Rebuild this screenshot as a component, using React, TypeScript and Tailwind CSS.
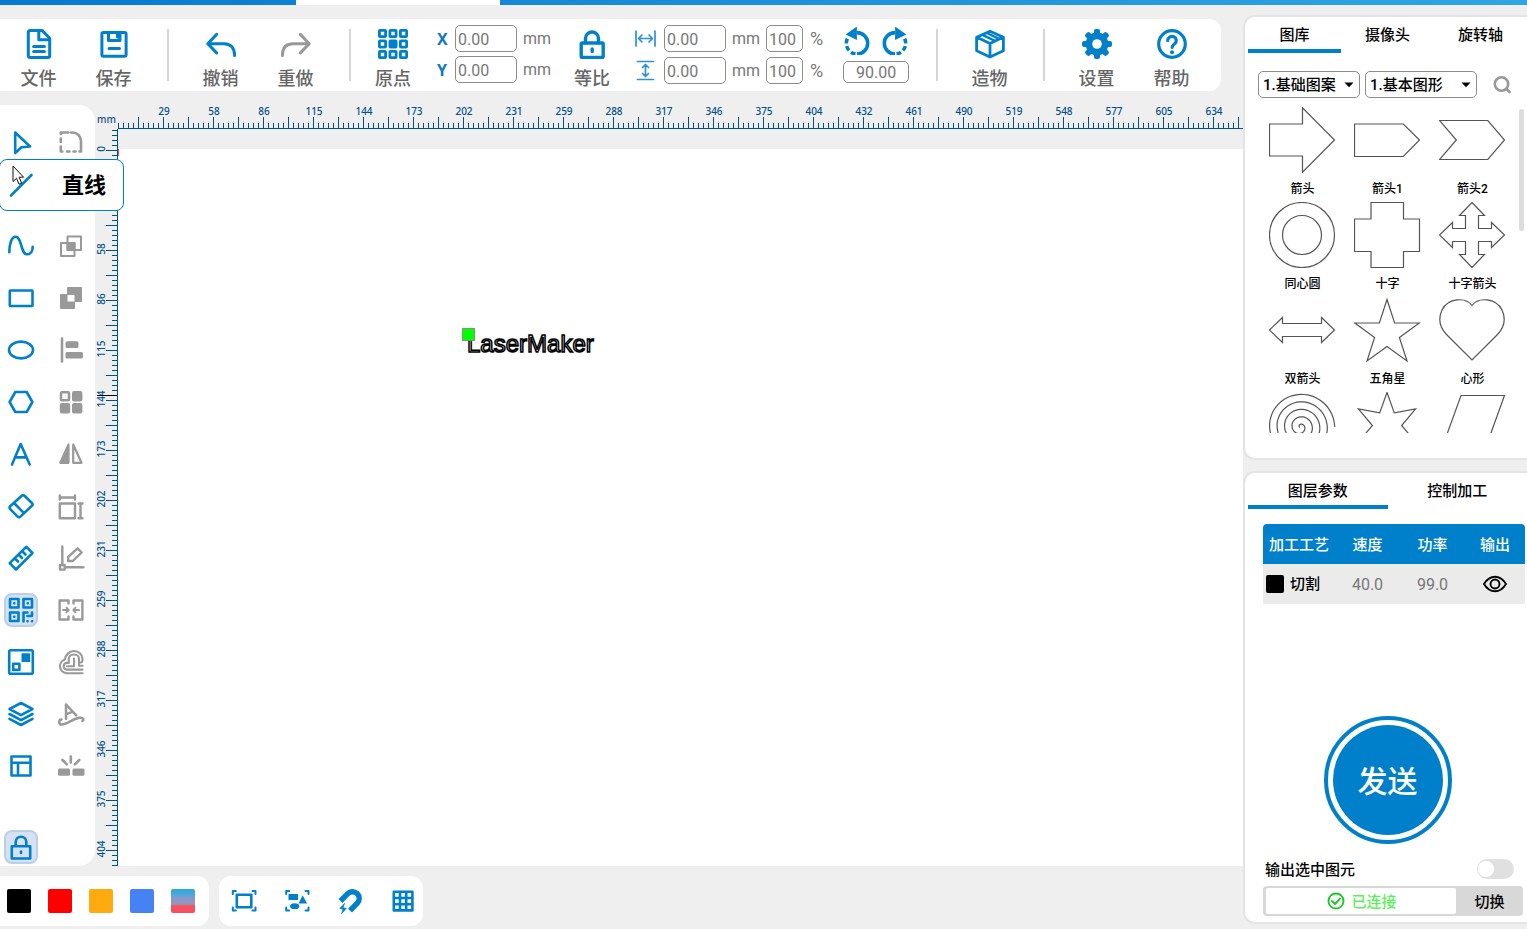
import type { FC, ReactNode } from "react";

const BLUE = "text-[#0080cb]";
const GRAY = "text-[#999999]";
const NUMBER_INPUT = "rounded-[5px] border border-[#8c8c8c] bg-white pt-px text-base text-[#777777] outline-none";

const Icon: FC<{ size?: number; stroke?: number; children: ReactNode }> = ({ size = 28, stroke = 2.6, children }) => (
  <svg
    width={size}
    height={size}
    viewBox={`0 0 ${size} ${size}`}
    fill="none"
    stroke="currentColor"
    strokeWidth={stroke}
    strokeLinecap="round"
    strokeLinejoin="round"
    className="shrink-0"
    aria-hidden="true"
  >
    {children}
  </svg>
);

/* ---------- top toolbar ---------- */

const ORIGIN_CELLS = [0, 10.5, 21];

const FileIcon = () => (
  <Icon size={30} stroke={3}>
    <path d="M6.3 1.6h12l7.4 7.6v17.2a2 2 0 0 1-2 2H6.3a2 2 0 0 1-2-2V3.6a2 2 0 0 1 2-2Z" />
    <path d="M14.8 2.5v8.2h10M9.6 17.5h10.8M9.6 22.5h10.8" />
  </Icon>
);

const SaveIcon = () => (
  <Icon size={30} stroke={3}>
    <rect x="2.9" y="3.6" width="24.2" height="23.6" rx="1.5" />
    <path d="M9.5 4v7.5h11.5V4M18.5 5v3M10 19.4h10.5" />
  </Icon>
);

const UndoIcon = () => (
  <Icon size={30} stroke={3}>
    <path d="M10.6 5.4 1.8 14.7l8.8 9.2M2.5 14.7H18c7 0 10.6 4.4 10.6 11.8" />
  </Icon>
);

const RedoIcon = () => (
  <Icon size={30} stroke={3}>
    <path d="m19.4 5.4 8.8 9.3-8.8 9.2M27.5 14.7H12C5 14.7 1.4 19.1 1.4 26.5" />
  </Icon>
);

const OriginIcon = () => (
  <Icon size={30} stroke={2.8}>
    {ORIGIN_CELLS.map((y) =>
      ORIGIN_CELLS.map((x) => (
        <rect
          key={`${x}-${y}`}
          x={x + 1.4}
          y={y + 1.4}
          width="6.2"
          height="6.2"
          rx="0.6"
          fill={x === 10.5 && y === 10.5 ? "currentColor" : "none"}
        />
      )),
    )}
  </Icon>
);

const RatioLockIcon = () => (
  <Icon size={30} stroke={3.4}>
    <path d="M8.5 14V9.5a6.5 6.5 0 0 1 13 0V14" />
    <rect x="4.2" y="14" width="22" height="14.5" rx="1" />
    <path d="M15.2 20v2.5" />
  </Icon>
);

const PackageIcon = () => (
  <Icon size={30} stroke={2.8}>
    <path d="M15 2.2 28.4 8.2v13.6L15 28 1.6 21.8V8.2ZM2 8.300l13 6.200 13-6.200M15 15v12.500" />
    <path d="m7.500 5.800 12.500 6M11.800 4l12.400 5.800" strokeWidth="2.400" />
  </Icon>
);

const GEAR_ANGLES = [0, 45, 90, 135];

const GearIcon = () => (
  <Icon size={30}>
    <g fill="currentColor" stroke="none">
      <circle cx="15" cy="15" r="11.4" />
      {GEAR_ANGLES.map((angle) => (
        <rect key={angle} x="12" y="0" width="6" height="30" rx="2" transform={`rotate(${angle} 15 15)`} />
      ))}
      <circle cx="15" cy="15" r="4.8" fill="#fff" />
    </g>
  </Icon>
);

const HelpIcon = () => (
  <Icon size={30} stroke={3.2}>
    <circle cx="15" cy="15" r="13.3" />
    <path d="M10.7 11.5a4.3 4.1 0 1 1 7 3.2c-1.5 1.2-2.6 1.7-2.6 3.8" />
    <circle cx="15" cy="23.2" r="2" fill="currentColor" stroke="none" />
  </Icon>
);

const RotateIcon: FC<{ clockwise?: boolean }> = ({ clockwise = false }) => (
  <Icon size={28} stroke={3.6}>
    <g transform={clockwise ? "translate(28 0) scale(-1 1)" : undefined} strokeLinecap="butt">
      <path d="M14 5.600a10.700 10.700 0 0 1 0 21.400" />
      <path d="M12.500 26.900A10.700 10.700 0 0 1 5.200 10.200" strokeDasharray="4.800 2.700" />
      <path d="M2.600 7.500 13.900-.5v13.600Z" fill="currentColor" stroke="none" />
    </g>
  </Icon>
);

const WidthIcon = () => (
  <Icon size={21} stroke={1.7}>
    <path d="M1 3v15M20 3v15M4 10.5h13M7 7l-3.500 3.500L7 14M14 7l3.500 3.500L14 14" />
  </Icon>
);

const HeightIcon = () => (
  <Icon size={21} stroke={1.7}>
    <path d="M2.5 1.5h16M2.5 19.5h16M10.5 5v11M7.500 7.500l3-3 3 3M7.500 13.500l3 3 3-3" />
  </Icon>
);

const ToolbarButton: FC<{ label: string; narrow?: boolean; disabled?: boolean; children: ReactNode }> = ({
  label,
  narrow = false,
  disabled = false,
  children,
}) => (
  <button
    type="button"
    className={`flex shrink-0 flex-col items-center gap-2 pt-[10px] ${narrow ? "w-[54px]" : "w-[75px] pr-[2px]"}`}
  >
    <span className={disabled ? GRAY : BLUE}>{children}</span>
    <span className="text-lg leading-6 font-medium text-[#666666]">{label}</span>
  </button>
);

const ToolbarDivider = () => <div className="mx-[15px] mt-[10px] h-[52px] w-[2px] shrink-0 bg-[#d6d6d6]" />;

const PositionField: FC<{ axis: string }> = ({ axis }) => (
  <label className="flex h-[27px] items-center">
    <span className="w-[18px] font-['Noto_Sans',sans-serif] text-base font-bold text-[#1478c4]">{axis}</span>
    <input defaultValue="0.00" className={`${NUMBER_INPUT} h-[27px] w-[62px] pl-[2px]`} />
    <span className="ml-[6px] pt-px text-base text-[#777777]">mm</span>
  </label>
);

const SizeField: FC<{ name: string; icon: ReactNode }> = ({ name, icon }) => (
  <div className="flex h-[27px] items-center text-[#777777]">
    <span className="text-[#2b92d4]">{icon}</span>
    <input aria-label={name} defaultValue="0.00" className={`${NUMBER_INPUT} ml-2 h-[27px] w-[62px] pl-[2px]`} />
    <span className="ml-[6px] w-[28px] pt-px text-base">mm</span>
    <input aria-label={`${name}%`} defaultValue="100" className={`${NUMBER_INPUT} ml-[6px] h-[27px] w-[37px] pl-[2px]`} />
    <span className="ml-[7px] w-[15px] pt-px text-lg">%</span>
  </div>
);

const Toolbar = () => (
  <header className="mt-[14px] mr-[22px] flex h-[72px] items-start rounded-r-xl bg-white pl-[2px]">
    <ToolbarButton label="文件"><FileIcon /></ToolbarButton>
    <ToolbarButton label="保存"><SaveIcon /></ToolbarButton>
    <ToolbarDivider />
    <ToolbarButton label="撤销"><UndoIcon /></ToolbarButton>
    <ToolbarButton label="重做" disabled><RedoIcon /></ToolbarButton>
    <ToolbarDivider />
    <ToolbarButton label="原点" narrow><OriginIcon /></ToolbarButton>
    <div className="ml-[17px] flex shrink-0 flex-col gap-1 pt-[6px]">
      <PositionField axis="X" />
      <PositionField axis="Y" />
    </div>
    <div className="ml-[14px]">
      <ToolbarButton label="等比" narrow><RatioLockIcon /></ToolbarButton>
    </div>
    <div className="ml-4 flex shrink-0 flex-col gap-[5px] pt-[6px]">
      <SizeField name="宽" icon={<WidthIcon />} />
      <SizeField name="高" icon={<HeightIcon />} />
    </div>
    <div className="mr-3 ml-[18px] flex w-[66px] shrink-0 flex-col pt-2">
      <div className={`flex justify-between ${BLUE}`}>
        <button type="button" aria-label="逆时针旋转"><RotateIcon /></button>
        <button type="button" aria-label="顺时针旋转"><RotateIcon clockwise /></button>
      </div>
      <input
        aria-label="旋转角度"
        defaultValue="90.00"
        className={`${NUMBER_INPUT} mt-[6px] h-[22px] w-full text-center`}
      />
    </div>
    <ToolbarDivider />
    <ToolbarButton label="造物"><PackageIcon /></ToolbarButton>
    <ToolbarDivider />
    <ToolbarButton label="设置"><GearIcon /></ToolbarButton>
    <ToolbarButton label="帮助"><HelpIcon /></ToolbarButton>
  </header>
);

/* ---------- left palette ---------- */

interface Tool {
  label: string;
  active?: boolean;
  icon: ReactNode;
}

const DRAW_TOOLS: Tool[] = [
  { label: "选择", icon: <path d="M8.2 4.5 23 18.5l-8.400.800-6.400 5.700Z" /> },
  { label: "直线", icon: <path d="M4 24 24 4" /> },
  { label: "曲线", icon: <path d="M2.300 20.300C2.300 12 4.500 4.800 8.700 4.800 15 4.800 13.500 22.300 20 22.300c4 0 5.700-3.800 5.700-7.600" /> },
  { label: "矩形", icon: <rect x="2.8" y="6.5" width="22.7" height="15.5" rx="0.5" /> },
  { label: "椭圆", icon: <ellipse cx="14" cy="14" rx="12" ry="8.4" /> },
  { label: "多边形", icon: <path d="M2.600 14 8.300 4h11.400l5.700 10-5.700 10H8.300Z" /> },
  { label: "文字", icon: <path d="M5 24.600 13.700 4l9 20.600M8.500 17.400h10.500" /> },
  {
    label: "橡皮擦",
    icon: <path d="m3.200 14.200 11.500-10.500a2 2 0 0 1 2.800 0l7.400 7.300a2 2 0 0 1 0 2.800L13.400 24.600a2 2 0 0 1-2.800 0l-7.400-7.500a2 2 0 0 1 0-2.900ZM7.500 11.500l9 9.200" />,
  },
  {
    label: "测量",
    icon: <path d="M19.200 2.800 25.500 9 9 25.500l-6.300-6.300ZM8 14.500l3 3M12 11l3 3M15.500 7.500l3 3" />,
  },
  {
    label: "二维码",
    active: true,
    icon: (
      <>
        <path d="M3 3h8.500v8.500H3ZM16.500 3H25v8.500h-8.500ZM3 16.500h8.500V25H3Z" />
        <path d="M16.500 25.500v-9h4M25 16.500V20h-4.500M20.500 25.200h.100M25 25.200h.100M7.200 7.200h.100M20.700 7.200h.100M7.200 20.700h.100" />
      </>
    ),
  },
  {
    label: "嵌套",
    icon: (
      <>
        <rect x="2.2" y="2.2" width="23.6" height="23.6" rx="1.5" />
        <rect x="14.5" y="5.3" width="8.7" height="8.7" rx="0.5" fill="currentColor" stroke="none" />
        <rect x="6.2" y="15.7" width="6.2" height="6.2" />
      </>
    ),
  },
  { label: "图层", icon: <path d="m14 3 11.500 6L14 15.200 2.500 9ZM2.500 14 14 20.200 25.500 14M2.500 18.800 14 25l11.500-6.200" /> },
  { label: "布局", icon: <path d="M4.500 4.500h19v19h-19ZM4.500 10.700h19M11 10.700v12.500" /> },
];

const EDIT_TOOLS: Tool[] = [
  {
    label: "圆角",
    icon: <path d="M3.800 6V4.500h7.500M14 4.500h1.500a8.500 8.500 0 0 1 8.500 8.500v10.500h-1.500M3.800 10.500v3.500M3.800 18.500v5h1.500M10 23.500h2.500M16.500 23.500h2" />,
  },
  { label: "平移", icon: null },
  {
    label: "交集",
    icon: (
      <g strokeWidth="2">
        <path d="M10.500 4.500h13.500v13.500h-13.500ZM4 11h13.500v13H4Z" />
        <path d="M10.500 11h7v7h-7Z" fill="currentColor" />
      </g>
    ),
  },
  {
    label: "差集",
    icon: (
      <path
        fillRule="evenodd"
        fill="currentColor"
        stroke="none"
        d="M11 3h13q1 0 1 1V17q0 1-1 1H18v6q0 1-1 1H4q-1 0-1-1V11q0-1 1-1h6V4q0-1 1-1ZM11.500 11h5.500q.500 0 .500.500V17q0 .500-.500.500h-6q-.500 0-.500-.500v-5.500q0-.500.500-.500Z"
      />
    ),
  },
  {
    label: "对齐",
    icon: (
      <>
        <path d="M5 2.500v23" />
        <g fill="currentColor" stroke="none">
          <rect x="8.5" y="5.3" width="13" height="6.7" rx="1.5" />
          <rect x="8.5" y="16" width="17.500" height="6.5" rx="1.5" />
        </g>
      </>
    ),
  },
  {
    label: "阵列",
    icon: (
      <>
        <rect x="4" y="4.2" width="8" height="8" rx="1" />
        <g fill="currentColor" stroke="none">
          <rect x="15" y="3" width="10.4" height="10.4" rx="2" />
          <rect x="2.8" y="15" width="10.4" height="10.4" rx="2" />
          <rect x="15" y="15" width="10.4" height="10.4" rx="2" />
        </g>
      </>
    ),
  },
  {
    label: "镜像",
    icon: (
      <g strokeWidth="2.2">
        <path d="M11.500 4.500v18.300H3.300Z" fill="currentColor" />
        <path d="M16.200 4.500v18.300h8.300Z" />
      </g>
    ),
  },
  {
    label: "尺寸",
    icon: <path strokeWidth="2.400" d="M2.800 11.500h15.200v14.700H2.800ZM2.800 3.500v4M18 3.500v4M3 5.500h15M21.500 11.500h4M21.500 26.200h4M23.500 11.500v14.700" />,
  },
  {
    label: "标注",
    icon: (
      <g strokeWidth="2.4">
        <path d="M5.300 2.500v18M8 23.300h18.500M3 21h4.600v4.600H3Z" />
        <path d="m20.500 4.300 4.200 4.200L15.800 17h-4.600v-4.200Z" />
      </g>
    ),
  },
  {
    label: "合并",
    icon: (
      <g strokeWidth="2.4">
        <path d="M11.500 7.500v-3H2.600v19h8.900v-3M16.500 7.500v-3h8.900v19h-8.900v-3" />
        <path d="M6 14h5.500M9.500 11.700l2.200 2.300-2.200 2.300M22 14h-5.500M18.500 11.700 16.300 14l2.200 2.300" strokeWidth="1.9" />
      </g>
    ),
  },
  {
    label: "偏移",
    icon: (
      <g strokeWidth="2.1">
        <path d="M25.500 25.200H9.500a7 7 0 0 1-1.500-13.700C8.500 6.500 12.500 3 17 3c4.800 0 8.500 3.500 8.500 8v1c0 1.500-.800 2.500-2 2.500" />
        <path d="M25.500 21.600h-16a3.400 3.400 0 0 1 0-6.700h2.300V11c0-2.500 2.200-4.500 5.200-4.500s5 2 5 4.500v6.800h3.500" />
        <path d="M17 10.500v7.700h-7" />
      </g>
    ),
  },
  {
    label: "路径文字",
    icon: (
      <g strokeWidth="2.500">
        <path d="M9 4.500v14.300M9 4.500l10.300 10.800M9.500 14.200l6-2.300" />
        <path d="M4.500 19.500c-3 .300-3.200 5 .500 5 5 0 10-5.500 17.500-6.800 4-.500 4.500 2.300 3 3.300" />
      </g>
    ),
  },
  {
    label: "打断",
    icon: (
      <>
        <path d="M13.800 4.500v6M5.500 8l4.300 4.300M22.200 8l-4.300 4.300" />
        <g fill="currentColor" stroke="none">
          <rect x="1" y="16.5" width="12" height="7.2" rx="1.5" />
          <rect x="15.5" y="16.5" width="12" height="7.2" rx="1.5" />
        </g>
      </>
    ),
  },
];

const ToolButton: FC<{ tool: Tool; tone: string }> = ({ tool, tone }) => (
  <button
    type="button"
    aria-label={tool.label}
    className={`flex size-[34px] items-center justify-center rounded-lg ${tone} ${
      tool.active ? "border-2 border-[#b9cfea] bg-[#d6e2f2]" : ""
    }`}
  >
    <Icon>{tool.icon}</Icon>
  </button>
);

const PointerCursor = () => (
  <svg width="14" height="22" viewBox="0 0 14 22" className="absolute top-[5px] left-[12px]" aria-hidden="true">
    <path d="M1 1v15.500l3.500-3.300 2.600 6 2.600-1.100-2.600-5.900h4.500Z" fill="#fff" stroke="#111" />
  </svg>
);

const LineFlyout = () => (
  <button
    type="button"
    className="absolute top-[54px] -left-px z-10 flex h-[52px] w-[125px] items-center rounded-lg border border-[#0080cb] bg-white pl-[7px]"
  >
    <span className={BLUE}>
      <Icon>
        <path d="M4 24.500 24.500 4" />
      </Icon>
    </span>
    <span className="ml-[27px] pt-px text-[22px] font-bold text-black">直线</span>
    <PointerCursor />
  </button>
);

const Palette = () => (
  <nav className="relative flex w-[95px] shrink-0 flex-col justify-between rounded-r-2xl bg-white pt-[11px] pb-[2px]">
    <div className="flex gap-4 pl-1">
      <div className="flex flex-col">
        {DRAW_TOOLS.map((tool) => (
          <div key={tool.label} className="flex h-[52px] items-center">
            <ToolButton tool={tool} tone={BLUE} />
          </div>
        ))}
      </div>
      <div className="flex flex-col">
        {EDIT_TOOLS.map((tool) => (
          <div key={tool.label} className="flex h-[52px] items-center">
            <ToolButton tool={tool} tone={GRAY} />
          </div>
        ))}
      </div>
    </div>
    <div className="pl-1">
      <ToolButton
        tone={BLUE}
        tool={{
          label: "锁定",
          active: true,
          icon: <path d="M8.700 13V9a5.300 5.300 0 0 1 10.600 0v4M4.800 13.300h18.400v12.200H4.800ZM14 18.500v1.500" />,
        }}
      />
    </div>
    <LineFlyout />
  </nav>
);

/* ---------- rulers and canvas ---------- */

const MM_PER_LABEL = 28.83;
const range = (count: number) => Array.from({ length: count }, (_, i) => i);

const HorizontalRuler = () => (
  <svg width="100%" height="24" className="block overflow-hidden" fill="#00508a">
    <rect x="0" y="23" width="100%" height="1" />
    {range(400).map((i) => {
      const tall = i % 5 === 4;
      return <rect key={i} x={i * 5} y={tall ? 12 : 18} width="1" height={tall ? 11 : 5} />;
    })}
    {range(22).map((i) => (
      <text
        key={i}
        x={46 + i * 50}
        y="10"
        textAnchor="middle"
        fontFamily="Noto Sans, sans-serif"
        fontSize="10"
        fontWeight="500"
      >
        {Math.round((i + 1) * MM_PER_LABEL)}
      </text>
    ))}
  </svg>
);

const VerticalRuler = () => (
  <svg width="23" height="100%" className="block overflow-hidden" fill="#00508a">
    <rect x="22" y="0" width="1" height="100%" />
    {range(300).map((i) => {
      const tall = i % 5 === 4;
      return <rect key={i} x={tall ? 11 : 17} y={1 + i * 5} width={tall ? 11 : 5} height="1" />;
    })}
    {range(15).map((i) => (
      <text
        key={i}
        transform={`translate(10 ${20 + i * 50}) rotate(-90)`}
        textAnchor="middle"
        fontFamily="Noto Sans, sans-serif"
        fontSize="10"
        fontWeight="500"
      >
        {Math.round(i * MM_PER_LABEL)}
      </text>
    ))}
    <rect x="2" y="266" width="20" height="1" fill="#000" />
  </svg>
);

const Workspace = () => (
  <main className="grid min-w-0 flex-1 grid-cols-[23px_minmax(0,1fr)] grid-rows-[24px_minmax(0,1fr)]">
    <span className="self-end pb-px pl-[2px] font-['Noto_Sans',sans-serif] text-[10px] leading-[18px] font-medium text-[#1c4f86]">
      mm
    </span>
    <HorizontalRuler />
    <div className="min-h-0 overflow-hidden">
      <VerticalRuler />
    </div>
    <div className="relative mt-5 overflow-hidden bg-white">
      <svg width="140" height="32" className="absolute top-[178px] left-[343px]" aria-label="LaserMaker">
        <text
          x="6"
          y="25"
          fontFamily="Liberation Sans, Arial, sans-serif"
          fontSize="24"
          fill="#fff"
          stroke="#000"
          strokeWidth="1.5"
        >
          LaserMaker
        </text>
        <rect x="1.5" y="1.5" width="12" height="12" fill="#00ff00" stroke="#7a9a7a" />
      </svg>
      <div className="absolute top-0 left-0 h-[7px] w-px bg-[#f04050]" />
    </div>
  </main>
);

/* ---------- bottom bar ---------- */

const SWATCHES = [
  { label: "黑色", className: "bg-black" },
  { label: "红色", className: "bg-[#ff0000]" },
  { label: "橙色", className: "bg-[#ffab0f]" },
  { label: "蓝色", className: "bg-[#4583f5]" },
  {
    label: "渐变",
    className: "bg-[linear-gradient(#2fa4dc_0%,#5aa9dc_33%,#9095c8_34%,#9095c8_62%,#b08a80_66%,#fa4f60_70%)]",
  },
];

const VIEW_TOOLS: Tool[] = [
  {
    label: "适应画布",
    icon: (
      <>
        <rect x="6.8" y="7.8" width="14.500" height="12.5" />
        <path strokeWidth="2" d="M2.800 7V4h3M22.500 4h3v3M2.800 20.500v3h3M25.500 20.500v3h-3" />
      </>
    ),
  },
  {
    label: "显示全部",
    icon: (
      <>
        <path strokeWidth="2" d="M3.200 7V4h3M22.500 4h3v3M3.200 20.500v3h3M25.500 20.500v3h-3" />
        <g fill="currentColor" stroke="none">
          <rect x="5.5" y="7" width="9.5" height="6" rx="0.5" />
          <path d="m19.600 8.300 4.500 8.200h-8.500Z" />
          <ellipse cx="11.7" cy="19.2" rx="4.6" ry="2.9" />
        </g>
      </>
    ),
  },
  {
    label: "吸附",
    icon: (
      <>
        <path strokeLinecap="butt" strokeWidth="5.5" d="m4.500 14 7-7.200a6.700 6.700 0 0 1 9.800 9.300L14 23.700" />
        <path d="m8.500 16.500-4.800 5 3.200.700-1.400 4.600 4.900-5.400-3.200-.600Z" fill="currentColor" strokeWidth="0.6" />
      </>
    ),
  },
  {
    label: "网格",
    icon: <path strokeWidth="2.6" d="M4.800 4.800h18.600v18.600H4.800ZM11 4.800v18.600M17.200 4.800v18.600M4.800 11h18.600M4.800 17.200h18.600" />,
  },
];

const BottomBar = () => (
  <footer className="mt-[10px] mb-[3px] flex h-[50px] gap-[10px]">
    <div className="flex items-center gap-[17px] rounded-r-xl bg-white pr-[14px] pl-[7px]">
      {SWATCHES.map(({ label, className }) => (
        <button key={label} type="button" aria-label={label} className={`size-6 rounded-[2px] ${className}`} />
      ))}
    </div>
    <div className={`flex items-center gap-[25px] rounded-xl bg-white pr-[6px] pl-[11px] ${BLUE}`}>
      {VIEW_TOOLS.map(({ label, icon }) => (
        <button key={label} type="button" aria-label={label}>
          <Icon>{icon}</Icon>
        </button>
      ))}
    </div>
  </footer>
);

/* ---------- right side ---------- */

const PANEL = "flex flex-col rounded-l-xl border-2 border-r-0 border-[#e4e4e4] bg-white pl-[3px]";

const starPoints = (spikes: number, outer: number, inner: number, cx: number, cy: number) =>
  range(spikes * 2)
    .map((i) => {
      const r = i % 2 === 0 ? outer : inner;
      const a = (Math.PI * i) / spikes - Math.PI / 2;
      return `${(cx + r * Math.cos(a)).toFixed(1)},${(cy + r * Math.sin(a)).toFixed(1)}`;
    })
    .join(" ");

// Archimedean spiral that winds clockwise and ends on the right-hand side
const spiralPoints = (outer: number, pitch: number, cx: number, cy: number) => {
  const steps = Math.floor((outer / pitch) * 48);
  return range(steps)
    .map((i) => {
      const r = outer - (i * pitch) / 48;
      const a = (-2 * Math.PI * i) / 48;
      return `${(cx + r * Math.cos(a)).toFixed(1)},${(cy + r * Math.sin(a)).toFixed(1)}`;
    })
    .join(" ");
};

const SHAPES: { name: string; drawing: ReactNode }[] = [
  { name: "箭头", drawing: <path d="M.5 17h33V.8L65.500 33 33.500 65.200V49H.5Z" /> },
  { name: "箭头1", drawing: <path d="M.5 17h48.800L65.500 33 49.300 49.500H.5Z" /> },
  { name: "箭头2", drawing: <path d="M.5 13.500h48.300L65.500 33 48.800 52.500H.5L17.300 33Z" /> },
  {
    name: "同心圆",
    drawing: (
      <>
        <circle cx="33" cy="33" r="32.5" />
        <circle cx="33" cy="33" r="19.5" />
      </>
    ),
  },
  { name: "十字", drawing: <path d="M17 .5h32.500V17h16v32.500h-16v16H17v-16H.5V17H17Z" /> },
  {
    name: "十字箭头",
    drawing: (
      <path d="M33 .5 45.500 13.500H39.500V26.500H52.500V20.500L65.500 33 52.500 45.500V39.500H39.500V52.500H45.500L33 65.500 20.500 52.500H26.500V39.500H13.500V45.500L.5 33 13.500 20.500V26.500H26.500V13.500H20.500Z" />
    ),
  },
  { name: "双箭头", drawing: <path d="M.5 33 13.500 20.500v6h39v-6l13 12.500-13 12.500v-6h-39v6Z" /> },
  { name: "五角星", drawing: <polygon points={starPoints(5, 34, 13, 33, 36.5)} /> },
  { name: "心形", drawing: <path d="M33 8.500C27 0 9 .5 3 13-1.500 23 1 31 8 38L33 63 58 38C65 31 67.500 23 63 13 57 .5 39 0 33 8.500Z" /> },
  { name: "螺旋", drawing: <polyline points={spiralPoints(34.5, 7.5, 31.3, 35)} /> },
  { name: "六角星", drawing: <polygon points={starPoints(6, 33, 14.6, 33, 33.5)} /> },
  { name: "平行四边形", drawing: <path d="M22 3.500h43.500L44 63H.5Z" /> },
];

const TabButton: FC<{ label: string; active?: boolean }> = ({ label, active = false }) => (
  <button
    type="button"
    role="tab"
    aria-selected={active}
    className={`h-full flex-1 border-b-4 pt-1 text-[15px] font-medium text-black ${
      active ? "border-[#0080cb]" : "border-transparent"
    }`}
  >
    {label}
  </button>
);

const GallerySelect: FC<{ name: string; value: string; width: string }> = ({ name, value, width }) => (
  <div className={`relative ${width}`}>
    <select
      aria-label={name}
      className="h-[27px] w-full appearance-none rounded-[5px] border border-[#8c8c8c] bg-white pt-px pl-1 text-[15px] leading-6 font-medium text-black outline-none"
    >
      <option>{value}</option>
    </select>
    <svg width="10" height="6" viewBox="0 0 10 6" className="pointer-events-none absolute top-[11px] right-[6px]">
      <path d="M.5.5h9L5 5.200Z" />
    </svg>
  </div>
);

const GalleryPanel = () => (
  <section className={`${PANEL} h-[445px] shrink-0`}>
    <div role="tablist" className="flex h-9 shrink-0">
      <TabButton label="图库" active />
      <TabButton label="摄像头" />
      <TabButton label="旋转轴" />
    </div>
    <div className="mt-[18px] flex items-center gap-[5px] pl-[10px]">
      <GallerySelect name="分类" value="1.基础图案" width="w-[102px]" />
      <GallerySelect name="子分类" value="1.基本图形" width="w-[112px]" />
      <button type="button" aria-label="搜索" className={`ml-[11px] ${GRAY}`}>
        <Icon size={18}>
          <circle cx="8.5" cy="8" r="6.7" />
          <path d="m13.500 13 3 3" />
        </Icon>
      </button>
    </div>
    <div className="mt-[9px] flex h-[326px] justify-between overflow-hidden pr-[3px] pl-[12px]">
      <ul className="grid grid-cols-3 content-start">
        {SHAPES.map(({ name, drawing }) => (
          <li key={name} className="flex h-[95px] w-[85px] flex-col items-center">
            <svg width="67" height="66" viewBox="0 0 67 66" fill="none" stroke="#555" strokeWidth="1.2" className="shrink-0">
              {drawing}
            </svg>
            <span className="mt-2 text-xs leading-4 font-medium text-black">{name}</span>
          </li>
        ))}
      </ul>
      <div className="mt-[2px] h-[122px] w-[5px] shrink-0 rounded-full bg-[#dcdcdc]" />
    </div>
  </section>
);

const EyeIcon = () => (
  <Icon size={24} stroke={1.9}>
    <path d="M1 12c3-5 6.800-7.300 11-7.300S20 7 23 12c-3 5-6.800 7.300-11 7.300S4 17 1 12Z" />
    <circle cx="12" cy="12" r="4.5" />
  </Icon>
);

const LayerTable = () => (
  <table className="mt-[15px] mr-[2px] ml-[15px] table-fixed text-[15px] font-medium">
    <thead>
      <tr className="h-10 bg-[#0080cb] text-white [&>th]:pt-[2px] [&>th]:font-medium">
        <th className="w-[72px] rounded-tl">加工工艺</th>
        <th className="w-[65px]">速度</th>
        <th className="w-[65px]">功率</th>
        <th className="rounded-tr">输出</th>
      </tr>
    </thead>
    <tbody>
      <tr className="h-10 bg-[#ebebeb] text-center text-[#777777]">
        <td>
          <span className="flex items-center gap-[6px] pl-[3px] text-black">
            <span className="size-[18px] rounded-[2px] bg-black" />
            <span className="pt-px">切割</span>
          </span>
        </td>
        <td className="pt-[2px] text-base font-normal">40.0</td>
        <td className="pt-[2px] text-base font-normal">99.0</td>
        <td>
          <button type="button" aria-label="输出" className="align-middle text-black">
            <EyeIcon />
          </button>
        </td>
      </tr>
    </tbody>
  </table>
);

const ProcessPanel = () => (
  <section className={`${PANEL} min-h-0 flex-1`}>
    <div role="tablist" className="flex h-9 shrink-0">
      <TabButton label="图层参数" active />
      <TabButton label="控制加工" />
    </div>
    <LayerTable />
    <div className="mt-auto flex flex-col items-center">
      <button
        type="button"
        className="flex size-32 items-center justify-center rounded-full border-4 border-[#0080cb] bg-white p-[5px]"
      >
        <span className="flex size-full items-center justify-center rounded-full bg-[#0080cb] pt-1 text-3xl font-medium text-white">
          发送
        </span>
      </button>
      <label className="mt-[15px] flex h-5 w-full items-center justify-between pr-[13px] pl-[17px] text-[15px] font-medium text-black">
        <span className="pt-[2px]">输出选中图元</span>
        <input
          type="checkbox"
          className="h-5 w-[37px] appearance-none rounded-full bg-[#e0e0e0] before:mt-[2px] before:ml-px before:block before:size-4 before:rounded-full before:bg-white checked:bg-[#0080cb] checked:before:ml-5"
        />
      </label>
      <div className="mt-[7px] mb-[6px] flex h-[30px] w-full pr-1 pl-[15px] text-[15px] font-medium">
        <div className="flex flex-1 rounded bg-[#d8d8d8] py-[2px] pl-[3px]">
          <div className="flex flex-1 items-center justify-center gap-[6px] rounded-[2px] bg-white pl-[2px] text-[#5cf05c]">
            <span className="text-[#22c62a]">
              <Icon size={18} stroke={1.9}>
                <circle cx="9" cy="9" r="7.5" />
                <path d="m5 9 3 3 5-5.500" />
              </Icon>
            </span>
            <span className="pt-[2px]">已连接</span>
          </div>
          <button type="button" className="w-[67px] pt-[2px] text-black">
            切换
          </button>
        </div>
      </div>
    </div>
  </section>
);

export default function App() {
  return (
    <div className="flex h-screen flex-col overflow-hidden bg-[#efefef] font-[Roboto,'Noto_Sans_CJK_SC',sans-serif]">
      <div className="flex h-[5px] shrink-0 bg-linear-to-r from-[#0678d0] to-[#2ea6e2] pl-[296px]">
        <div className="w-[204px] bg-white" />
      </div>
      <div className="flex min-h-0 flex-1">
        <div className="flex min-w-0 flex-1 flex-col">
          <Toolbar />
          <div className="mt-[14px] flex min-h-0 flex-1">
            <Palette />
            <Workspace />
          </div>
          <BottomBar />
        </div>
        <aside className="flex w-[284px] shrink-0 flex-col gap-[11px] pt-[10px] pb-[5px]">
          <GalleryPanel />
          <ProcessPanel />
        </aside>
      </div>
    </div>
  );
}
